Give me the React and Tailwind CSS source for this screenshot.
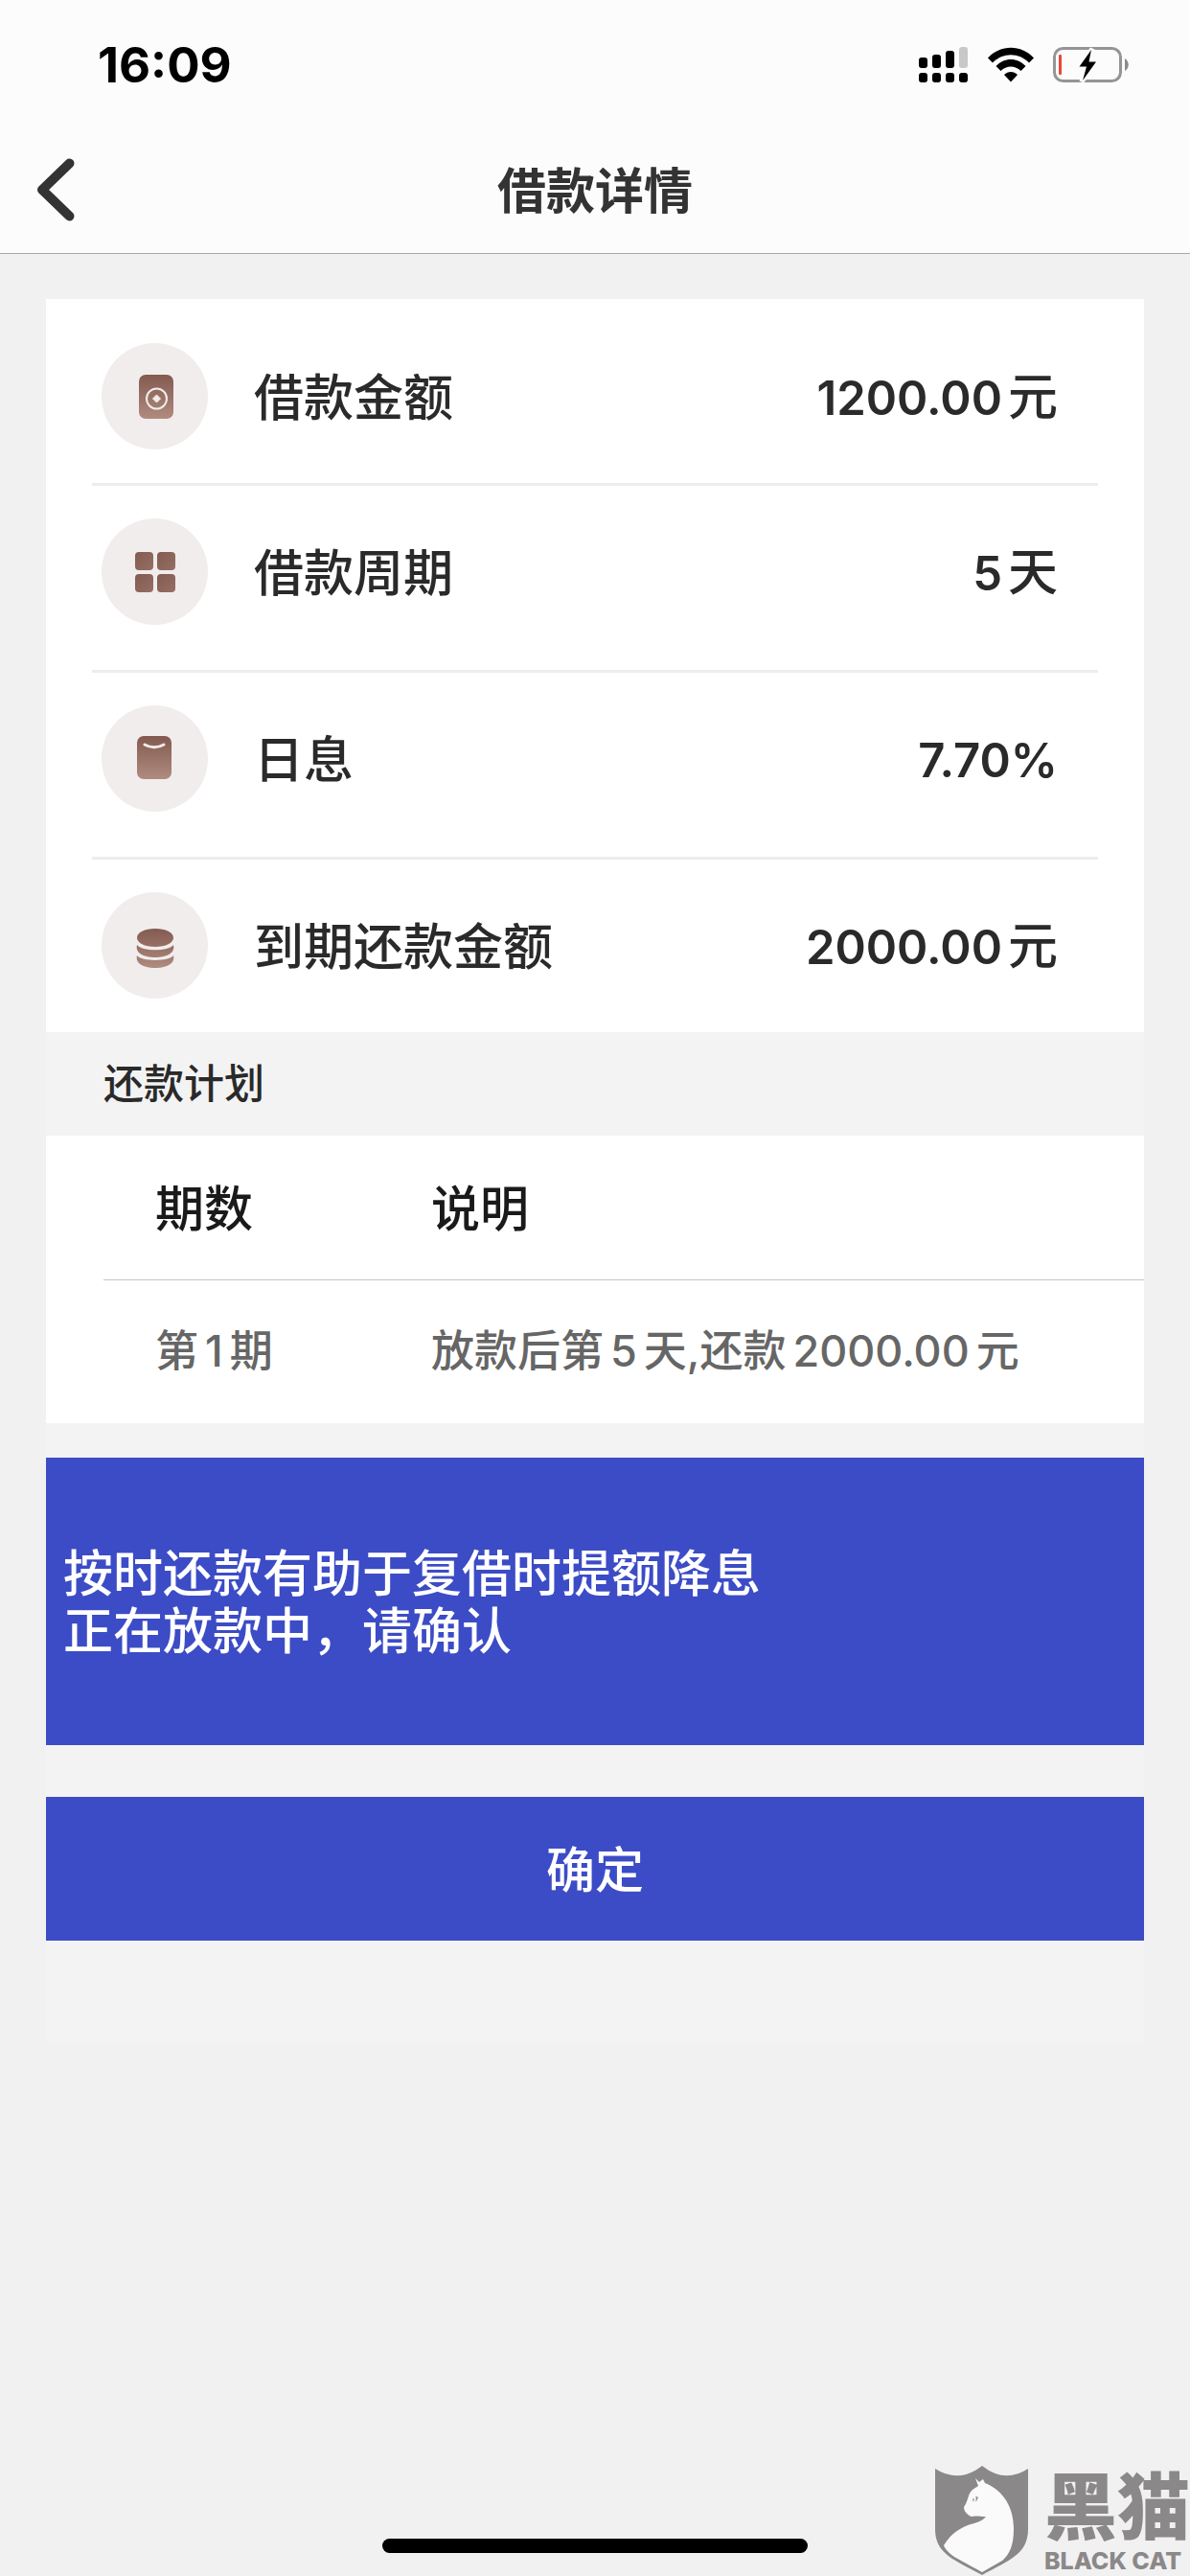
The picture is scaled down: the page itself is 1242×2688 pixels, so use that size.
import React from 'react';

const loanRows = [
  { id: 'amount', label: '借款金额', value: '1200.00', unit: '元', icon: AmountIcon },
  { id: 'period', label: '借款周期', value: '5', unit: '天', icon: PeriodIcon },
  { id: 'rate', label: '日息', value: '7.70%', unit: '', icon: RateIcon },
  { id: 'repay', label: '到期还款金额', value: '2000.00', unit: '元', icon: CoinsIcon },
];

// Status bar icons
function SignalIcon() {
  return (
    <svg width="52" height="38" viewBox="0 0 52 38" aria-hidden="true">
      <rect x="0" y="11" width="9" height="11" rx="3" />
      <rect x="14" y="8" width="9" height="14" rx="3" />
      <rect x="28" y="4" width="9" height="18" rx="3" />
      <rect x="42" y="0" width="9" height="22" rx="3" fill="#c8c8c8" />
      <rect x="0" y="27" width="9" height="10" rx="3" />
      <rect x="14" y="27" width="9" height="10" rx="3" />
      <rect x="28" y="27" width="9" height="10" rx="3" />
      <rect x="42" y="27" width="9" height="10" rx="3" />
    </svg>
  );
}

function WifiIcon() {
  return (
    <svg width="48" height="38" viewBox="0 0 48 38" aria-hidden="true">
      <path d="M0 11.5C13-3 35-3 48 11.5L43 16.5C32.500 5.500 15.500 5.500 5 16.500Z" />
      <path d="M8.500 20C17 10.500 31 10.500 39.500 20L34.500 25C28.500 19 19.500 19 13.500 25Z" />
      <path d="M17 29C21 25 27 25 31 29L24 36.500Z" />
    </svg>
  );
}

function BatteryIcon() {
  return (
    <svg width="80" height="38" viewBox="0 0 80 38" aria-hidden="true">
      <rect x="1.500" y="1.500" width="69" height="34" rx="9" fill="none" stroke="#959595" strokeWidth="3" />
      <path d="M75 12c5 3 5 10 0 13z" fill="#8b8b8b" />
      <rect x="6" y="8" width="3" height="21" rx="1" fill="#e74a3b" />
      <path d="M41 2L27 20.500H34L30 36L46 15.500H38.500Z" fill="#000" stroke="#fcfcfc" strokeWidth="5" />
      <path d="M40 3L27.500 20.500H35L31 35L45 15.500H37.500Z" />
    </svg>
  );
}

// Row icons share the same brown gradient
function BrownGradient({ id }) {
  return (
    <defs>
      <linearGradient id={id} x1="0" y1="0" x2="0" y2="1">
        <stop offset="0" stopColor="#835a4f" />
        <stop offset="1" stopColor="#b08b7f" />
      </linearGradient>
    </defs>
  );
}

function AmountIcon() {
  return (
    <svg width="111" height="111" viewBox="0 0 111 111" aria-hidden="true">
      <BrownGradient id="amount-fill" />
      <rect x="39" y="33" width="36" height="46" rx="7" fill="url(#amount-fill)" />
      <circle cx="57.500" cy="58" r="10.500" fill="none" stroke="#f1eded" strokeWidth="2" />
      <path d="M57.500 54L61.500 58L57.500 62L53.500 58Z" fill="#f1eded" stroke="#f1eded" strokeLinejoin="round" />
    </svg>
  );
}

function PeriodIcon() {
  return (
    <svg width="111" height="111" viewBox="0 0 111 111" aria-hidden="true">
      <defs>
        <linearGradient id="period-fill" x1="0" y1="0" x2="1" y2="1">
          <stop offset="0" stopColor="#835a4f" />
          <stop offset="1" stopColor="#967065" />
        </linearGradient>
      </defs>
      <g fill="url(#period-fill)">
        <rect x="35" y="35" width="19" height="19" rx="4" />
        <rect x="58" y="35" width="19" height="19" rx="4" />
        <rect x="35" y="58" width="19" height="19" rx="4" />
        <rect x="58" y="58" width="19" height="19" rx="4" />
      </g>
    </svg>
  );
}

function RateIcon() {
  return (
    <svg width="111" height="111" viewBox="0 0 111 111" aria-hidden="true">
      <BrownGradient id="rate-fill" />
      <rect x="37" y="32" width="36" height="45" rx="7" fill="url(#rate-fill)" />
      <path d="M45 41Q55 46.500 65 41" fill="none" stroke="#f1eded" strokeWidth="3" strokeLinecap="round" />
    </svg>
  );
}

function CoinsIcon() {
  return (
    <svg width="111" height="111" viewBox="0 0 111 111" aria-hidden="true">
      <BrownGradient id="coins-fill" />
      <path
        d="M37 47.500C37 42 45 38 56 38S75 42 75 47.500S67 57 56 57S37 53 37 47.500Z
           M37 55C42 62 70 62 75 55C77 63 69 68 56 68S35 63 37 55Z
           M37 66C42 72.500 70 72.500 75 66C77 74 69 79 56 79S35 74 37 66Z"
        fill="url(#coins-fill)"
      />
    </svg>
  );
}

function StatusBar() {
  return (
    <div className="flex h-[132px] items-center justify-between pt-1 pr-[63px] pl-[102px]">
      <span className="text-[51px] leading-[60px] font-bold text-black">16:09</span>
      <div className="flex items-center">
        <SignalIcon />
        <span className="ml-5">
          <WifiIcon />
        </span>
        <span className="ml-5">
          <BatteryIcon />
        </span>
      </div>
    </div>
  );
}

function NavBar() {
  return (
    <div className="grid h-[132px] grid-cols-[120px_1fr_120px] items-center">
      <button type="button" aria-label="返回" className="flex h-full items-center pl-[38px]">
        <svg width="40" height="66" viewBox="0 0 40 66" fill="none" aria-hidden="true">
          <path d="M34.500 5.500L6 33L34.500 60.500" stroke="#333" strokeWidth="10" strokeLinecap="round" strokeLinejoin="round" />
        </svg>
      </button>
      <h1 className="pt-1 text-center text-[51px] leading-[60px] font-semibold text-[#333]">借款详情</h1>
    </div>
  );
}

function LoanRow({ row }) {
  const Icon = row.icon;
  return (
    <div className="flex items-center border-b-[3px] border-[#ededed] pt-[34px] pr-[42px] pb-[47px] pl-[10px] first:pt-[46px] first:pb-[35px] last:border-b-0 last:pb-[35px]">
      <span className="rounded-full bg-[#f1eded]">
        <Icon />
      </span>
      <dt className="ml-12 flex-1 pt-1">{row.label}</dt>
      <dd className="flex items-baseline gap-[6px] pt-1">
        <span className="text-[49px] font-semibold">{row.value}</span>
        {row.unit && <span>{row.unit}</span>}
      </dd>
    </div>
  );
}

function RepaymentPlan() {
  return (
    <section>
      <h2 className="pl-[60px] text-[42px] leading-[108px] font-medium text-[#2a2a2a]">还款计划</h2>
      <div className="bg-white pl-[60px]">
        <table className="w-full table-fixed border-collapse text-left">
          <thead>
            <tr className="h-[150px] border-b border-[#c6c6c6] text-[51px] leading-[60px] text-[#1a1a1a]">
              <th scope="col" className="w-[342px] pt-1 pl-[54px] font-medium">期数</th>
              <th scope="col" className="pt-1 font-medium">说明</th>
            </tr>
          </thead>
          <tbody>
            <tr className="h-[150px] text-[45px] leading-[60px] font-medium text-[#666]">
              <td className="pl-[54px]">
                第<span className="mx-[7px]">1</span>期
              </td>
              <td>
                放款后第<span className="mx-[7px]">5</span>天,还款<span className="mx-[7px]">2000.00</span>元
              </td>
            </tr>
          </tbody>
        </table>
      </div>
    </section>
  );
}

function BlackCatMark() {
  return (
    <div className="absolute right-0 bottom-0 flex items-end text-[#8b8889]">
      <svg width="98" height="115" viewBox="0 0 98 115" aria-hidden="true">
        <path d="M0 3Q25 19 49 0Q73 19 97 3V66C97 92 78 98 49 114C20 98 0 92 0 66Z" fill="#8b8889" />
        <path
          d="M42 13L46 17L50 14L52 18C72 26 82 44 82 66C82 82 78 92 70 99L49 111L20 95C13 90 10 86 9 83C17 70 28 63 41 60C47 58 51 56 53 53C47 53 43 52 38 53C33 51 30 47 30 43C35 36 34 29 39 25L45 21Z"
          fill="#fafafa"
        />
        <path d="M39 35L43 32L45 33L43 37L40 38Z" fill="#8b8889" />
        <path d="M42 33L41 38" stroke="#fafafa" strokeWidth="2" />
      </svg>
      <div className="ml-4 flex flex-col">
        <span className="text-[76px] leading-[80px] font-black">黑猫</span>
        <span className="text-[25px] leading-[32px] font-extrabold">BLACK CAT</span>
      </div>
    </div>
  );
}

export default function App() {
  return (
    <div className="relative flex min-h-screen flex-col overflow-hidden bg-[#f1f1f1] font-[Inter,'Noto_Sans_CJK_SC',sans-serif]">
      <header className="border-b border-[#a9a9a9] bg-[#fcfcfc]">
        <StatusBar />
        <NavBar />
      </header>

      <main className="mx-12 mt-[47px] bg-[#f3f3f3] pb-[107px]">
        <dl className="bg-white px-12 text-[52px] leading-[60px] font-medium text-[#2a2a2a]">
          {loanRows.map((row) => (
            <LoanRow key={row.id} row={row} />
          ))}
        </dl>

        <RepaymentPlan />

        <p className="mt-9 bg-[#3c4cc6] px-[18px] pt-[92px] pb-[88px] text-[52px] leading-[60px] font-medium text-white">
          按时还款有助于复借时提额降息
          <br />
          正在放款中，请确认
        </p>
        <button
          type="button"
          className="mt-[54px] w-full bg-[#3c4cc6] pt-[47px] pb-[43px] text-[51px] leading-[60px] font-medium text-white"
        >
          确定
        </button>
      </main>

      {/* Home indicator */}
      <div className="mx-auto mt-auto mb-6 h-[15px] w-[444px] rounded-full bg-black" />
      <BlackCatMark />
    </div>
  );
}
